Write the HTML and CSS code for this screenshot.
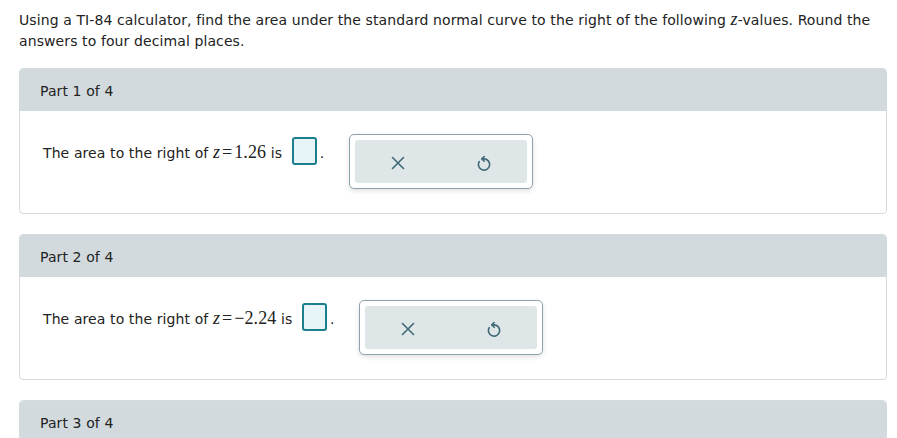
FILE: index.html
```html
<!DOCTYPE html>
<html>
<head>
<meta charset="utf-8">
<link rel="stylesheet" href="styles.css">
</head>
<body>
<p class="intro">Using a TI-84 calculator, find the area under the standard normal curve to the right of the following <span class="mi">z</span>-values. Round the answers to four decimal places.</p>

<section class="card">
  <div class="card-head">Part 1 of 4</div>
  <div class="card-body">
    <div class="stmt">The area to the right of <span class="math"><span class="mi">z</span><span class="mo">=</span>1.26</span> is <span class="ans"></span><span class="dot">.</span></div>
    <div class="tools">
      <div class="tools-inner">
        <svg class="ico" width="14" height="14" viewBox="0 0 14 14"><path d="M1.5 1.5 L12.5 12.5 M12.5 1.5 L1.5 12.5" stroke="#3f6976" stroke-width="1.6" fill="none" stroke-linecap="round"/></svg>
        <svg class="ico" width="16" height="17" viewBox="0 0 16 17"><path d="M3.2 7.7 A5.6 5.6 0 1 0 8 4.9 L6 4.9" stroke="#3f6976" stroke-width="1.6" fill="none" stroke-linecap="round" stroke-linejoin="round"/><path d="M8.2 2.5 L5.8 4.9 L8.2 7.3" stroke="#3f6976" stroke-width="1.6" fill="none" stroke-linecap="round" stroke-linejoin="round"/></svg>
      </div>
    </div>
  </div>
</section>

<section class="card">
  <div class="card-head">Part 2 of 4</div>
  <div class="card-body">
    <div class="stmt">The area to the right of <span class="math"><span class="mi">z</span><span class="mo">=</span>−2.24</span> is <span class="ans"></span><span class="dot">.</span></div>
    <div class="tools">
      <div class="tools-inner">
        <svg class="ico" width="14" height="14" viewBox="0 0 14 14"><path d="M1.5 1.5 L12.5 12.5 M12.5 1.5 L1.5 12.5" stroke="#3f6976" stroke-width="1.6" fill="none" stroke-linecap="round"/></svg>
        <svg class="ico" width="16" height="17" viewBox="0 0 16 17"><path d="M3.2 7.7 A5.6 5.6 0 1 0 8 4.9 L6 4.9" stroke="#3f6976" stroke-width="1.6" fill="none" stroke-linecap="round" stroke-linejoin="round"/><path d="M8.2 2.5 L5.8 4.9 L8.2 7.3" stroke="#3f6976" stroke-width="1.6" fill="none" stroke-linecap="round" stroke-linejoin="round"/></svg>
      </div>
    </div>
  </div>
</section>

<section class="card">
  <div class="card-head">Part 3 of 4</div>
  <div class="card-body"></div>
</section>
</body>
</html>
```

FILE: styles.css
```css
html, body { margin: 0; padding: 0; background: #fff; }
body {
  font-family: "DejaVu Sans", Verdana, sans-serif;
  font-size: 14px;
  color: #222;
  padding: 9px 10px 0 19px;
  overflow: hidden;
  height: 438px;
  box-sizing: border-box;
}
.intro {
  margin: 0 0 16px 0;
  line-height: 21px;
  letter-spacing: 0.1px;
}
.mi { font-family: "Liberation Serif", "Times New Roman", serif; font-style: italic; font-size: 18px; }
.math { font-family: "Liberation Serif", "Times New Roman", serif; font-size: 18px; }
.mo { margin: 0 2px 0 2px; }
.card {
  border: 1px solid #d3dbde;
  border-radius: 4px;
  margin-bottom: 20px;
  overflow: hidden;
}
.card-head {
  background: #d2dadd;
  height: 42px;
  line-height: 44px;
  padding-left: 20px;
  letter-spacing: 0.1px;
}
.card-body {
  height: 102px;
  display: flex;
  align-items: flex-start;
  padding-left: 23px;
  box-sizing: border-box;
}
.stmt {
  margin-top: 27px;
  line-height: 28px;
  height: 28px;
  letter-spacing: 0.1px;
  white-space: nowrap;
}
.ans {
  display: inline-block;
  width: 21px;
  height: 24px;
  border: 2px solid #1b7f8e;
  border-radius: 3px;
  background: #e7f4f8;
  margin-left: 5px;
  vertical-align: middle;
  position: relative;
  top: -3px;
}
.dot { margin-left: 3px; }
.tools {
  margin-top: 23px;
  margin-left: 25px;
  border: 1px solid #8da2aa;
  border-radius: 5px;
  background: #fff;
  box-shadow: 0 2px 5px rgba(0,0,0,0.12);
  padding: 5px;
  width: 172px;
  height: 43px;
}
.tools-inner {
  background: #dfe6e8;
  border-radius: 3px;
  height: 100%;
  display: flex;
  align-items: center;
  justify-content: space-around;
  padding-top: 2px;
  box-sizing: border-box;
}
.ico { display: block; }
```
